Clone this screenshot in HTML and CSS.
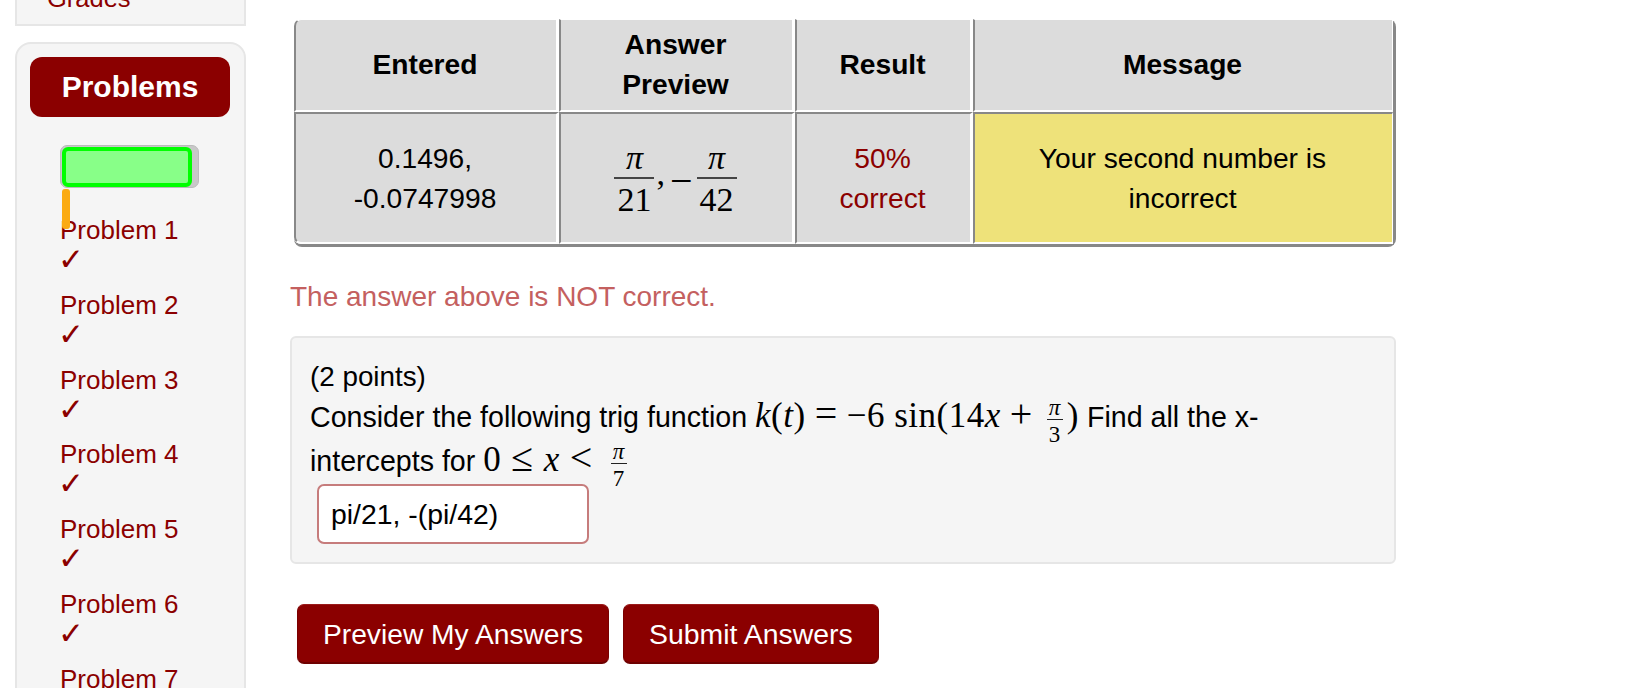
FILE: index.html
```html
<!DOCTYPE html>
<html lang="en">
<head>
<meta charset="utf-8">
<title>Problem</title>
<link rel="stylesheet" href="styles.css">
</head>
<body>
<div class="page">
  <aside class="side">
    <div class="panel-grades"><a class="link">Grades</a></div>
    <div class="panel-problems">
      <h2 class="problems-title">Problems</h2>
      <div class="progress"><div class="progress-green"></div></div>
      <div class="progress-orange"></div>
      <ul class="plist">
        <li class="first"><a class="link">Problem 1</a><span class="check">✓</span></li>
        <li><a class="link">Problem 2</a><span class="check">✓</span></li>
        <li><a class="link">Problem 3</a><span class="check">✓</span></li>
        <li><a class="link">Problem 4</a><span class="check">✓</span></li>
        <li><a class="link">Problem 5</a><span class="check">✓</span></li>
        <li><a class="link">Problem 6</a><span class="check">✓</span></li>
        <li><a class="link">Problem 7</a></li>
      </ul>
    </div>
  </aside>
  <main class="main">
    <table class="results">
      <colgroup><col class="c1"><col class="c2"><col class="c3"><col class="c4"></colgroup>
      <tr class="head">
        <th>Entered</th>
        <th>Answer<br>Preview</th>
        <th>Result</th>
        <th>Message</th>
      </tr>
      <tr class="body">
        <td>0.1496,<br>-0.0747998</td>
        <td>
          <span class="m-preview">
            <span class="bigfrac"><span class="num">π</span><span class="den">21</span></span><span class="comma">,</span><span class="minus">−</span><span class="bigfrac"><span class="num">π</span><span class="den">42</span></span>
          </span>
        </td>
        <td class="res">50%<br>correct</td>
        <td class="msg">Your second number is<br>incorrect</td>
      </tr>
    </table>
    <p class="notice">The answer above is NOT correct.</p>
    <div class="well">
      <div class="line l1">(2 points)</div>
      <div class="line l2">Consider the following trig function <span class="math"><i>k</i>(<i>t</i>)<span class="op">=</span>−6 sin(14<i>x</i><span class="op">+</span><span class="frac"><span class="fn">π</span><span class="fd">3</span></span>)</span> Find all the x-</div>
      <div class="line l3">intercepts for <span class="math">0<span class="op">≤</span><i>x</i><span class="op">&lt;</span><span class="frac"><span class="fn">π</span><span class="fd">7</span></span></span></div>
      <input class="answer" type="text" value="pi/21, -(pi/42)">
    </div>
    <div class="actions">
      <button class="btn btn-preview">Preview My Answers</button>
      <button class="btn btn-submit">Submit Answers</button>
    </div>
  </main>
</div>
</body>
</html>
```
FILE: styles.css
```css
* { box-sizing: border-box; }
html, body { margin: 0; padding: 0; background: #fff; }
body { font-family: "Liberation Sans", Arial, sans-serif; color: #000; font-size: 28.2px; }
.page { display: flex; width: 1640px; height: 688px; overflow: hidden; }
.side { width: 231px; margin-left: 15px; flex: none; }
.link { color: #8b0000; }

.panel-grades {
  height: 26px; background: #f5f5f5; border: 2px solid #e6e6e6; border-top: 0;
  display: flex; align-items: flex-end; justify-content: flex-start; padding: 0 0 11px 30px;
  font-size: 25.5px; line-height: 30px; overflow: hidden;
}
.panel-problems {
  margin-top: 16px; height: 700px; background: #f5f5f5; border: 2px solid #e6e6e6;
  border-radius: 16px; padding: 13px 14px 0 13px; position: relative;
}
.problems-title {
  margin: 0; height: 60px; background: #8b0000; color: #fff; border-radius: 12px;
  font-size: 30px; font-weight: bold; line-height: 60px; text-align: center;
}
.progress {
  margin: 28px 0 0 30px; width: 139px; height: 43px; background: #c8c8c8;
  border: 1px solid #bbb; border-radius: 7px; padding: 1px 0 0 1px;
}
.progress-green { width: 130px; height: 40px; background: #88ff88; border: 4px solid #00ff00; border-radius: 6px; }
.progress-orange { position: absolute; left: 45px; top: 145px; width: 8px; height: 40px; background: #fbab12; border-radius: 3px; }
.plist { list-style: none; margin: 0; padding: 0 0 0 30px; font-size: 26px; line-height: 29px; }
.plist li { margin-bottom: 16.8px; }
.plist li.first { margin-top: 28px; }
.link { display: block; height: 29px; }
.panel-grades .link { height: auto; }
.check { display: block; height: 29px; margin-left: -2px; color: #8b0000; font-family: "DejaVu Sans", sans-serif; font-size: 31px; line-height: 29px; }

.main { width: 1106px; margin-left: 44px; flex: none; }
.results {
  margin: 19px 0 0 4px; width: 1102px; height: 228px; table-layout: fixed;
  border-collapse: separate; border-spacing: 0; background: #fff;
  border-right: 3px solid #888; border-bottom: 3px solid #888; border-radius: 8px;
  line-height: 40px;
}
.c1 { width: 265px; } .c2 { width: 236px; } .c3 { width: 178px; }
.results th, .results td {
  background-color: #dcdcdc; text-align: center; vertical-align: middle; padding: 0 2px 0 0;
  border-left: 2px solid #888; border-right: 3px solid #fff; border-bottom: 2px solid #fff;
}
.results th { font-size: 28.2px; font-weight: bold; height: 93px; padding-bottom: 2px; border-top: 1px solid #fff; }
.results td { border-top: 2px solid #888; height: 132px; }
.results th:last-child, .results td:last-child { border-right: 1px solid #fff; }
.results th:first-child { border-top-left-radius: 7px; }
.results td:first-child { border-bottom-left-radius: 7px; }
.results td.res { color: #8b0000; }
.results td.msg { background-color: #eee27a; }
.m-preview { display: inline-flex; align-items: center; font-family: "Liberation Serif", serif; font-size: 34px; line-height: 1; }
.bigfrac { display: inline-flex; flex-direction: column; align-items: stretch; text-align: center; }
.bigfrac .num { font-style: italic; padding: 0 0 7px; line-height: 25px; border-bottom: 2px solid #444; }
.bigfrac .den { padding: 4px 3px 0; line-height: 34px; }
.comma { align-self: flex-end; margin-bottom: 26px; padding: 0 5px 0 2px; }
.minus { padding: 0 4px 0 0; font-size: 40px; }

.notice { margin: 30px 0 0; color: #c4605f; font-size: 28px; line-height: 40px; }
.well {
  margin-top: 19px; height: 228px; background: #f5f5f5; border: 2px solid #e6e6e6; border-radius: 6px;
  padding: 19px 18px 0;
}
.line { line-height: 40px; white-space: nowrap; }
.l1 { font-size: 27.8px; }
.l2 { height: 40px; font-size: 28.6px; margin-top: -1px; }
.l3 { height: 42px; font-size: 28.6px; padding-top: 4px; }
.math { font-family: "Liberation Serif", serif; font-size: 35px; letter-spacing: 0.5px; }
.op { margin: 0 9px; font-size: 40px; line-height: 30px; }
.l3 .op { margin: 0 10px; }
.frac { display: inline-flex; flex-direction: column; vertical-align: 12px; text-align: center; font-size: 23px; margin: -12px 4px -20px 5px; }
.l3 .frac { margin-left: 8px; }
.fn { font-style: italic; border-bottom: 1.5px solid #222; padding: 0 2px 2px; line-height: 19px; }
.fd { line-height: 24px; padding-top: 3px; }
.answer {
  display: block; margin: 6px 0 0 7px; width: 272px; height: 60px;
  border: 2px solid #c67c7c; border-radius: 7px; background: #fff; padding: 0 12px;
  font: 28.4px "Liberation Sans", Arial, sans-serif; color: #000; outline: none;
}
.actions { display: flex; gap: 14px; margin: 40px 0 0 7px; }
.btn {
  height: 60px; padding: 1px 25px 0; background: #8b0000; color: #fff;
  border: 1px solid #7a0000; border-bottom: 2px solid #6e0000; border-top-color: #9a1a1a;
  border-radius: 7px; font: 28.2px "Liberation Sans", Arial, sans-serif;
}
.btn-submit { font-size: 28.4px; }
```
